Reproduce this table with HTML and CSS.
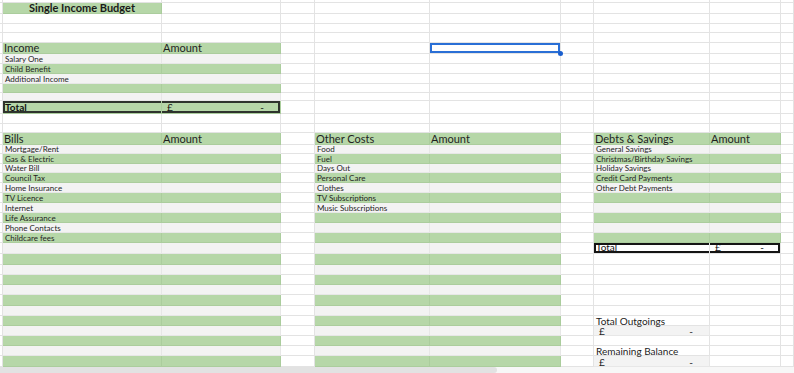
FILE: index.html
```html
<!DOCTYPE html>
<html lang="en">
<head>
<meta charset="utf-8">
<title>Single Income Budget</title>
<link rel="stylesheet" href="styles.css">
</head>
<body>
<div class="sheet">
<table class="grid">
<colgroup>
<col class="w0"><col class="wa"><col class="wb"><col class="wc"><col class="wd"><col class="we"><col class="wf"><col class="wg"><col class="wh"><col class="wi">
</colgroup>
<tbody>
<tr class="h3"><td></td><td></td><td></td><td></td><td></td><td></td><td></td><td></td><td></td><td></td></tr>
<tr class="h11"><td></td><td class="g title">Single Income Budget</td><td></td><td></td><td></td><td></td><td></td><td></td><td></td><td></td></tr>
<tr class="h10"><td></td><td></td><td></td><td></td><td></td><td></td><td></td><td></td><td></td><td></td></tr>
<tr class="h9"><td></td><td></td><td></td><td></td><td></td><td></td><td></td><td></td><td></td><td></td></tr>
<tr class="h10"><td></td><td></td><td></td><td></td><td></td><td></td><td></td><td></td><td></td><td></td></tr>
<tr class="h11"><td></td><td class="g hd">Income</td><td class="g hd">Amount</td><td></td><td></td><td class="sel"><span class="handle"></span></td><td></td><td></td><td></td><td></td></tr>
<tr class="h10"><td></td><td class="s">Salary One</td><td class="s"></td><td></td><td></td><td></td><td></td><td></td><td></td><td></td></tr>
<tr class="h10"><td></td><td class="g">Child Benefit</td><td class="g"></td><td></td><td></td><td></td><td></td><td></td><td></td><td></td></tr>
<tr class="h10"><td></td><td class="s">Additional Income</td><td class="s"></td><td></td><td></td><td></td><td></td><td></td><td></td><td></td></tr>
<tr class="h9"><td></td><td class="g"></td><td class="g"></td><td></td><td></td><td></td><td></td><td></td><td></td><td></td></tr>
<tr class="h8"><td></td><td class="s"></td><td class="s"></td><td></td><td></td><td></td><td></td><td></td><td></td><td></td></tr>
<tr class="h13"><td></td><td class="g tot totl">Total</td><td class="g tot totr"><div class="acc"><span>£</span><span>-</span></div></td><td></td><td></td><td></td><td></td><td></td><td></td><td></td></tr>
<tr class="h10"><td></td><td></td><td></td><td></td><td></td><td></td><td></td><td></td><td></td><td></td></tr>
<tr class="h9"><td></td><td></td><td></td><td></td><td></td><td></td><td></td><td></td><td></td><td></td></tr>
<tr class="h12"><td></td><td class="g hd">Bills</td><td class="g hd">Amount</td><td></td><td class="g hd">Other Costs</td><td class="g hd">Amount</td><td></td><td class="g hd">Debts &amp; Savings</td><td class="g hd">Amount</td><td></td></tr>
<tr class="h9"><td></td><td class="s">Mortgage/Rent</td><td class="s"></td><td></td><td class="s">Food</td><td class="s"></td><td></td><td class="s">General Savings</td><td class="s"></td><td></td></tr>
<tr class="h10"><td></td><td class="g">Gas &amp; Electric</td><td class="g"></td><td></td><td class="g">Fuel</td><td class="g"></td><td></td><td class="g">Christmas/Birthday Savings</td><td class="g"></td><td></td></tr>
<tr class="h9"><td></td><td class="s">Water Bill</td><td class="s"></td><td></td><td class="s">Days Out</td><td class="s"></td><td></td><td class="s">Holiday Savings</td><td class="s"></td><td></td></tr>
<tr class="h10"><td></td><td class="g">Council Tax</td><td class="g"></td><td></td><td class="g">Personal Care</td><td class="g"></td><td></td><td class="g">Credit Card Payments</td><td class="g"></td><td></td></tr>
<tr class="h10"><td></td><td class="s">Home Insurance</td><td class="s"></td><td></td><td class="s">Clothes</td><td class="s"></td><td></td><td class="s">Other Debt Payments</td><td class="s"></td><td></td></tr>
<tr class="h10"><td></td><td class="g">TV Licence</td><td class="g"></td><td></td><td class="g">TV Subscriptions</td><td class="g"></td><td></td><td class="g"></td><td class="g"></td><td></td></tr>
<tr class="h10"><td></td><td class="s">Internet</td><td class="s"></td><td></td><td class="s">Music Subscriptions</td><td class="s"></td><td></td><td class="s"></td><td class="s"></td><td></td></tr>
<tr class="h10"><td></td><td class="g">Life Assurance</td><td class="g"></td><td></td><td class="g"></td><td class="g"></td><td></td><td class="g"></td><td class="g"></td><td></td></tr>
<tr class="h10"><td></td><td class="s">Phone Contacts</td><td class="s"></td><td></td><td class="s"></td><td class="s"></td><td></td><td class="s"></td><td class="s"></td><td></td></tr>
<tr class="h10"><td></td><td class="g">Childcare fees</td><td class="g"></td><td></td><td class="g"></td><td class="g"></td><td></td><td class="g"></td><td class="g"></td><td></td></tr>
<tr class="h10"><td></td><td class="s"></td><td class="s"></td><td></td><td class="s"></td><td class="s"></td><td></td><td class="dtot totl">Total</td><td class="dtot totr"><div class="acc"><span>£</span><span>-</span></div></td><td></td></tr>
<tr class="h11"><td></td><td class="g"></td><td class="g"></td><td></td><td class="g"></td><td class="g"></td><td></td><td></td><td></td><td></td></tr>
<tr class="h10"><td></td><td class="s"></td><td class="s"></td><td></td><td class="s"></td><td class="s"></td><td></td><td></td><td></td><td></td></tr>
<tr class="h10"><td></td><td class="g"></td><td class="g"></td><td></td><td class="g"></td><td class="g"></td><td></td><td></td><td></td><td></td></tr>
<tr class="h10"><td></td><td class="s"></td><td class="s"></td><td></td><td class="s"></td><td class="s"></td><td></td><td></td><td></td><td></td></tr>
<tr class="h11"><td></td><td class="g"></td><td class="g"></td><td></td><td class="g"></td><td class="g"></td><td></td><td></td><td></td><td></td></tr>
<tr class="h10"><td></td><td class="s"></td><td class="s"></td><td></td><td class="s"></td><td class="s"></td><td></td><td></td><td></td><td></td></tr>
<tr class="h10"><td></td><td class="g"></td><td class="g"></td><td></td><td class="g"></td><td class="g"></td><td></td><td class="lbl">Total Outgoings</td><td></td><td></td></tr>
<tr class="h10"><td></td><td class="s"></td><td class="s"></td><td></td><td class="s"></td><td class="s"></td><td></td><td class="s lbl"><div class="acc"><span>£</span><span>-</span></div></td><td></td><td></td></tr>
<tr class="h10"><td></td><td class="g"></td><td class="g"></td><td></td><td class="g"></td><td class="g"></td><td></td><td></td><td></td><td></td></tr>
<tr class="h10"><td></td><td class="s"></td><td class="s"></td><td></td><td class="s"></td><td class="s"></td><td></td><td class="lbl">Remaining Balance</td><td></td><td></td></tr>
<tr class="h11"><td></td><td class="g"></td><td class="g"></td><td></td><td class="g"></td><td class="g"></td><td></td><td class="s lbl"><div class="acc"><span>£</span><span>-</span></div></td><td></td><td></td></tr>
</tbody>
</table>
<div class="hscroll"><div class="thumb"></div></div>
</div>
</body>
</html>
```
FILE: styles.css
```css
html, body {
  margin: 0;
  padding: 0;
  background: #ffffff;
  overflow: hidden;
}
.sheet {
  width: 794px;
  height: 373px;
  display: flex;
  flex-direction: column;
  font-family: "Lato", "Liberation Sans", sans-serif;
  color: #1e1e1e;
}
.grid {
  table-layout: fixed;
  border-collapse: separate;
  border-spacing: 0;
  width: 794px;
  flex: none;
}
.w0 { width: 3px; }
.wa { width: 159px; }
.wb { width: 119px; }
.wc { width: 34px; }
.wd { width: 115px; }
.we { width: 131px; }
.wf { width: 33px; }
.wg { width: 116px; }
.wh { width: 71px; }
.wi { width: 13px; }

.grid td {
  padding: 0 0 0 2px;
  border-right: 1px solid #e3e3e3;
  border-bottom: 1px solid #e3e3e3;
  font-size: 8px;
  line-height: 8px;
  vertical-align: bottom;
  white-space: nowrap;
  box-sizing: border-box;
}
.h3 { height: 3px; }
.h8 { height: 8px; }
.h9 { height: 9px; }
.h10 { height: 10px; }
.h11 { height: 11px; }
.h12 { height: 12px; }
.h13 { height: 13px; }

.grid td.g {
  background: #b6d7a8;
  border-color: #abcd9d;
}
.grid td.s {
  background: #f3f3f3;
  border-color: #e7e7e7;
}
.grid td.title {
  font-weight: 700;
  font-size: 11px;
  line-height: 9px;
  text-align: center;
  color: #1a1a1a;
  padding: 0 0 1px 0;
}
.grid td.hd {
  font-size: 11px;
  line-height: 9px;
  color: #1f1f1f;
  padding-left: 1px;
  padding-bottom: 1px;
}
.grid td.lbl {
  font-size: 10px;
  line-height: 8px;
  color: #222;
}
.grid td.tot {
  font-weight: 700;
  font-size: 10px;
  line-height: 8px;
  padding-bottom: 2px;
  color: #111;
}
.grid td.tot.totl {
  box-shadow: inset 2px 2px 0 #2e332d, inset 0 -2px 0 #2e332d;
}
.grid td.tot.totr {
  font-weight: 400;
  box-shadow: inset -2px 2px 0 #2e332d, inset 0 -2px 0 #2e332d;
}
.grid td.dtot {
  font-size: 10px;
  line-height: 8px;
  padding-bottom: 2px;
  color: #111;
}
.grid td.dtot.totl {
  box-shadow: inset 2px 2px 0 #151515, inset 0 -2px 0 #151515;
}
.grid td.dtot.totr {
  box-shadow: inset -2px 2px 0 #151515, inset 0 -2px 0 #151515;
}
.acc {
  display: flex;
  justify-content: space-between;
  padding: 0 16px 0 3px;
}
.grid td.sel {
  position: relative;
  box-shadow: inset 0 0 0 2px #2a6fd6;
}
.handle {
  position: absolute;
  right: -3px;
  bottom: -3px;
  width: 5px;
  height: 5px;
  border-radius: 50%;
  background: #1a5fce;
}
.hscroll {
  flex: 1;
  background: #f7f7f7;
  display: flex;
  align-items: stretch;
}
.thumb {
  width: 497px;
  background: #e2e2e2;
  border-radius: 0 4px 4px 0;
}
```
